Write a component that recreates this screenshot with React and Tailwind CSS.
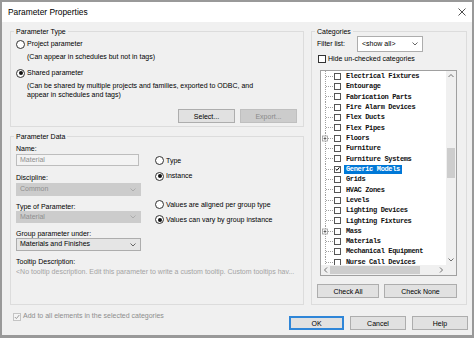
import React from 'react';

// small chevron used by combo boxes and scroll bars
function Chevron({ dir = 'down', color = '#444', size = 6 }) {
  const paths = {
    down: 'M0.5 1.5 L3 4 L5.5 1.5',
    up: 'M0.5 4 L3 1.5 L5.5 4',
    left: 'M4 0.5 L1.5 3 L4 5.5',
    right: 'M2 0.5 L4.5 3 L2 5.5',
  };
  return (
    <svg width={size} height={size} viewBox="0 0 6 6" className="shrink-0">
      <path d={paths[dir]} fill="none" stroke={color} strokeWidth="0.9" />
    </svg>
  );
}

function Radio({ checked, label, className = '' }) {
  return (
    <div className={`flex items-center h-[10px] gap-[2px] ${className}`}>
      <span className="w-[9px] h-[9px] rounded-full border border-[#333] bg-white flex items-center justify-center shrink-0">
        {checked && <span className="w-[4px] h-[4px] rounded-full bg-[#111]" />}
      </span>
      <span className="leading-[10px] whitespace-nowrap">{label}</span>
    </div>
  );
}

function Button({ children, className = '', disabled = false, primary = false }) {
  const look = disabled
    ? 'bg-[#cccccc] border border-[#bfbfbf] text-[#8a8a8a]'
    : primary
      ? 'bg-[#e1e1e1] border-2 border-[#2f86d8] text-black'
      : 'bg-[#e1e1e1] border border-[#adadad] text-black';
  return (
    <div className={`h-[14px] flex items-center justify-center text-[7px] leading-none ${look} ${className}`}>
      {children}
    </div>
  );
}

function ComboBox({ value, className = '', disabled = false, height = 'h-[13px]', bg = 'bg-[#e5e5e5]' }) {
  return (
    <div
      className={`${height} flex items-center justify-between pl-[3px] pr-[4px] border ${
        disabled ? 'bg-[#cccccc] border-[#cccccc] text-[#8f8f8f]' : `${bg} border-[#adadad] text-black`
      } ${className}`}
    >
      <span className="whitespace-nowrap">{value}</span>
      <Chevron color={disabled ? '#a8a8a8' : '#555'} />
    </div>
  );
}

const categories = [
  { name: 'Electrical Fixtures' },
  { name: 'Entourage' },
  { name: 'Fabrication Parts' },
  { name: 'Fire Alarm Devices' },
  { name: 'Flex Ducts' },
  { name: 'Flex Pipes' },
  { name: 'Floors', expand: true },
  { name: 'Furniture' },
  { name: 'Furniture Systems' },
  { name: 'Generic Models', checked: true, selected: true },
  { name: 'Grids' },
  { name: 'HVAC Zones' },
  { name: 'Levels' },
  { name: 'Lighting Devices' },
  { name: 'Lighting Fixtures' },
  { name: 'Mass', expand: true },
  { name: 'Materials' },
  { name: 'Mechanical Equipment' },
  { name: 'Nurse Call Devices' },
];

function TreeRow({ item }) {
  return (
    <div className="h-[10.33px] flex items-center shrink-0">
      <svg width="13" height="11" viewBox="0 0 13 11" className="shrink-0">
        <line x1="4.5" y1="0" x2="4.5" y2="11" stroke="#a0a0a0" strokeWidth="1" strokeDasharray="1 1" />
        {item.expand ? (
          <>
            <rect x="1.5" y="3" width="5" height="5" fill="#fff" stroke="#9a9a9a" strokeWidth="0.8" />
            <line x1="2.6" y1="5.5" x2="5.4" y2="5.5" stroke="#333" strokeWidth="0.7" />
            <line x1="4" y1="4.1" x2="4" y2="6.9" stroke="#333" strokeWidth="0.7" />
            <line x1="7" y1="5.5" x2="13" y2="5.5" stroke="#a0a0a0" strokeWidth="1" strokeDasharray="1 1" />
          </>
        ) : (
          <line x1="5" y1="5.5" x2="13" y2="5.5" stroke="#a0a0a0" strokeWidth="1" strokeDasharray="1 1" />
        )}
      </svg>
      <span className="w-[7px] h-[7px] border border-[#555] bg-white flex items-center justify-center shrink-0">
        {item.checked && (
          <svg width="6" height="6" viewBox="0 0 6 6">
            <path d="M0.8 3 L2.4 4.6 L5.3 1" fill="none" stroke="#000" strokeWidth="1.2" />
          </svg>
        )}
      </span>
      <span
        className={`ml-[3px] px-[2px] h-[9px] flex items-center whitespace-nowrap ${
          item.selected ? 'bg-[#0078d7] text-white' : 'text-[#111]'
        }`}
      >
        {item.name}
      </span>
    </div>
  );
}

export default function App() {
  return (
    <div className="w-[474px] h-[338px] bg-[#f0f0f0] border-x-2 border-t-2 border-b-[3px] border-[#999999] flex flex-col text-[7px] text-black font-['Liberation_Sans',Arial,sans-serif] overflow-hidden">
      {/* Title bar */}
      <div className="h-[20px] bg-white flex items-center justify-between pl-[6px] pr-[6px] shrink-0">
        <span className="text-[8.4px]">Parameter Properties</span>
        <svg width="8" height="8" viewBox="0 0 8 8">
          <path d="M0.5 0.5 L7.5 7.5 M7.5 0.5 L0.5 7.5" stroke="#222" strokeWidth="0.8" />
        </svg>
      </div>

      <div className="flex-1 flex flex-col pl-[8px] pr-[5px] pt-[4.5px]">
        <div className="flex gap-[7px] h-[278.5px]">
          {/* Left column */}
          <div className="w-[294px] flex flex-col">
            <fieldset className="border border-[#dcdcdc] pl-[3px] pr-[6px] pb-[3px]">
              <legend className="px-[2px] leading-[9px]">Parameter Type</legend>
              <div className="pl-[2px] pt-[3.5px] flex flex-col">
                <Radio label="Project parameter" />
                <div className="pl-[11px] mt-[3px] leading-[10px]">(Can appear in schedules but not in tags)</div>
                <Radio checked label="Shared parameter" className="mt-[6px]" />
                <div className="pl-[11px] mt-[3px] leading-[9px]">
                  <div className="whitespace-nowrap">(Can be shared by multiple projects and families, exported to ODBC, and</div>
                  <div>appear in schedules and tags)</div>
                </div>
                <div className="flex justify-end gap-[5px] mt-[10px]">
                  <Button className="w-[57px]">Select...</Button>
                  <Button className="w-[57px]" disabled>Export...</Button>
                </div>
              </div>
            </fieldset>

            <fieldset className="flex-1 border border-[#dcdcdc] pl-[3px] pr-[6px] mt-[5px]">
              <legend className="px-[2px] leading-[9px]">Parameter Data</legend>
              <div className="pl-[2px] flex flex-col">
                <div className="flex gap-[14px]">
                  <div className="w-[125px] flex flex-col">
                    <div className="mt-[2.5px] leading-[9px]">Name:</div>
                    <div className="mt-[1.5px] h-[12px] w-[123px] border border-[#bdbdbd] bg-[#f3f3f3] text-[#8f8f8f] pl-[3px] flex items-center">
                      Material
                    </div>
                    <div className="mt-[6.5px] leading-[9px]">Discipline:</div>
                    <ComboBox value="Common" disabled className="mt-[1.5px]" />
                    <div className="mt-[5.5px] leading-[9px]">Type of Parameter:</div>
                    <ComboBox value="Material" disabled className="mt-[0.5px]" height="h-[12px]" />
                    <div className="mt-[5.5px] leading-[9px]">Group parameter under:</div>
                    <ComboBox value="Materials and Finishes" className="mt-[0.5px]" />
                  </div>
                  <div className="flex flex-col">
                    <Radio label="Type" className="mt-[14.5px]" />
                    <Radio checked label="Instance" className="mt-[5.5px]" />
                    <Radio label="Values are aligned per group type" className="mt-[18.5px]" />
                    <Radio checked label="Values can vary by group instance" className="mt-[5px]" />
                  </div>
                </div>
                <div className="mt-[5.5px] leading-[9px]">Tooltip Description:</div>
                <div className="mt-[1px] leading-[9px] text-[#a3a3a3] whitespace-nowrap overflow-hidden">
                  &lt;No tooltip description. Edit this parameter to write a custom tooltip. Custom tooltips hav...
                </div>
              </div>
            </fieldset>
          </div>

          {/* Categories */}
          <fieldset className="w-[156px] border border-[#dcdcdc] pl-[3px] pr-[9px]">
            <legend className="px-[2px] leading-[9px]">Categories</legend>
            <div className="pl-[2px] flex flex-col">
              <div className="mt-[0.5px] h-[16px] flex items-center">
                <span className="w-[40px]">Filter list:</span>
                <ComboBox value="<show all>" height="h-[16px]" bg="bg-white" className="w-[66px] pl-[4px] pr-[4px]" />
              </div>
              <div className="mt-[2px] h-[10px] flex items-center gap-[2px]">
                <span className="ml-[1px] w-[8px] h-[8px] border border-[#333] bg-white" />
                <span>Hide un-checked categories</span>
              </div>

              {/* Tree */}
              <div className="mt-[6px] ml-[3px] h-[206px] border border-[#a0a0a0] bg-white grid grid-cols-[1fr_10px] grid-rows-[1fr_10px] overflow-hidden font-['Liberation_Mono',monospace] font-bold text-[7px] tracking-[-0.35px]">
                <div className="flex flex-col overflow-hidden">
                  {categories.map(item => (
                    <TreeRow key={item.name} item={item} />
                  ))}
                </div>
                <div className="bg-[#f0f0f0] flex flex-col items-center">
                  <div className="h-[10px] flex items-center">
                    <Chevron dir="up" color="#606060" />
                  </div>
                  <div className="flex-1 w-full px-[1px]">
                    <div className="mt-[67px] h-[30px] bg-[#cdcdcd]" />
                  </div>
                  <div className="h-[10px] flex items-center">
                    <Chevron dir="down" color="#606060" />
                  </div>
                </div>
                <div className="bg-[#f0f0f0] flex items-center">
                  <div className="w-[9px] flex justify-center">
                    <Chevron dir="left" color="#606060" />
                  </div>
                  <div className="flex-1 h-full py-[1px]">
                    <div className="w-[90px] h-full bg-[#cdcdcd]" />
                  </div>
                  <div className="w-[10px] flex justify-center">
                    <Chevron dir="right" color="#606060" />
                  </div>
                </div>
                <div className="bg-[#f0f0f0]" />
              </div>

              <div className="mt-[8px] flex gap-[5px]">
                <Button className="w-[62px]">Check All</Button>
                <Button className="w-[73px]">Check None</Button>
              </div>
            </div>
          </fieldset>
        </div>

        {/* Bottom row */}
        <div className="flex justify-between mr-[-1px]">
          <div className="ml-[3px] mt-[7px] h-[9px] flex items-center gap-[2px] text-[#8d8d8d]">
            <span className="w-[8px] h-[8px] border border-[#c4c4c4] bg-[#f4f4f4] flex items-center justify-center">
              <svg width="6" height="6" viewBox="0 0 6 6">
                <path d="M0.8 3 L2.4 4.6 L5.3 1" fill="none" stroke="#9a9a9a" strokeWidth="1" />
              </svg>
            </span>
            <span>Add to all elements in the selected categories</span>
          </div>
          <div className="mt-[11px] flex gap-[6px]">
            <Button primary className="w-[55px] h-[14px]">OK</Button>
            <Button className="w-[56px]">Cancel</Button>
            <Button className="w-[56px]">Help</Button>
          </div>
        </div>
      </div>
    </div>
  );
}
